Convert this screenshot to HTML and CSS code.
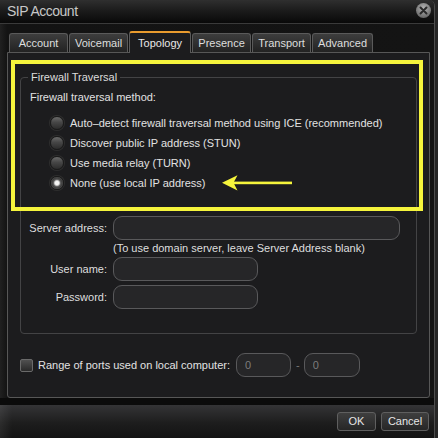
FILE: index.html
```html
<!DOCTYPE html>
<html>
<head>
<meta charset="utf-8">
<title>SIP Account</title>
<link rel="stylesheet" href="styles.css">
</head>
<body>
<div class="window">
  <div class="titlebar">
    <span class="title">SIP Account</span>
    <span class="close">
      <svg width="9" height="9" viewBox="0 0 9 9"><path d="M1.5 1.5 L7.5 7.5 M7.5 1.5 L1.5 7.5" stroke="#2a2a2a" stroke-width="2" stroke-linecap="round"/></svg>
    </span>
  </div>
  <div class="content">
    <div class="tabs">
      <div class="tab">Account</div>
      <div class="tab">Voicemail</div>
      <div class="tab tab-active">Topology</div>
      <div class="tab">Presence</div>
      <div class="tab">Transport</div>
      <div class="tab">Advanced</div>
    </div>
    <div class="panel">
      <fieldset class="group">
        <legend class="group-title">Firewall Traversal</legend>
        <div class="method-label">Firewall traversal method:</div>
        <div class="radios">
          <label class="radio-row"><input type="radio" class="radio" name="fw">Auto–detect firewall traversal method using ICE (recommended)</label>
          <label class="radio-row"><input type="radio" class="radio" name="fw">Discover public IP address (STUN)</label>
          <label class="radio-row"><input type="radio" class="radio" name="fw">Use media relay (TURN)</label>
          <label class="radio-row"><input type="radio" class="radio" name="fw" checked>None (use local IP address)</label>
        </div>
        <div class="form-grid">
          <label class="field-label">Server address:</label>
          <input class="field field-wide" type="text">
          <div class="hint">(To use domain server, leave Server Address blank)</div>
          <label class="field-label">User name:</label>
          <input class="field field-short" type="text">
          <label class="field-label gap-top">Password:</label>
          <input class="field field-short gap-top" type="password">
        </div>
      </fieldset>
      <div class="ports-row">
        <input type="checkbox" class="checkbox">
        <span class="port-label">Range of ports used on local computer:</span>
        <input class="field port" type="text" value="0">
        <span class="dash">-</span>
        <input class="field port port-2" type="text" value="0">
      </div>
    </div>
  </div>
  <div class="strip"></div>
  <div class="footer">
    <button class="btn btn-ok">OK</button>
    <button class="btn btn-cancel">Cancel</button>
  </div>
  <div class="highlight"></div>
  <svg class="arrow" width="76" height="22" viewBox="0 0 76 22">
    <rect x="12" y="9.6" width="60" height="2.6" fill="#f5f43c"/>
    <path d="M2 10.8 L17.5 3.2 L13.5 10.8 L17.5 18.6 Z" fill="#f5f43c"/>
  </svg>
</div>
</body>
</html>
```
FILE: styles.css
```css
* { box-sizing: border-box; }
html, body { margin: 0; padding: 0; }
body {
  width: 438px;
  height: 438px;
  overflow: hidden;
  background: #262626;
  font-family: "Liberation Sans", Arial, sans-serif;
  font-size: 11px;
  color: #e2e2e2;
}
.window {
  position: relative;
  width: 435px;
  height: 438px;
  display: flex;
  flex-direction: column;
  background: #131313;
  border-right: 1px solid #4e4e4e;
  border-top-right-radius: 6px;
  overflow: hidden;
}
.titlebar {
  flex: none;
  height: 24px;
  display: flex;
  justify-content: space-between;
  align-items: flex-start;
  padding: 0 3px 0 7px;
  background: linear-gradient(#2f2f2f, #1c1c1c 45%, #090909);
  border-bottom: 1px solid #3a3a3a;
}
.title {
  font-size: 14px;
  letter-spacing: -0.5px;
  line-height: 23px;
  color: #c8c8c8;
}
.close {
  margin-top: 3px;
  width: 15px;
  height: 15px;
  border-radius: 50%;
  background: radial-gradient(circle at 50% 35%, #b4b4b4, #7a7a7a 60%, #505050);
  display: flex;
  align-items: center;
  justify-content: center;
}
.content {
  flex: none;
  padding: 7px 4px 0 7px;
  background: linear-gradient(90deg, #202020, #131313 7px, #141414);
}
.tabs {
  display: flex;
  align-items: flex-end;
  gap: 1px;
  height: 21px;
  padding-left: 2px;
}
.tab {
  height: 19px;
  min-width: 59px;
  padding: 0 5px;
  border: 1px solid #5a5a5a;
  border-bottom: none;
  border-radius: 3px 3px 0 0;
  background: linear-gradient(#3d3d3d, #222);
  line-height: 18px;
  text-align: center;
  color: #dedede;
}
.tab-active {
  position: relative;
  z-index: 1;
  height: 22px;
  min-width: 62px;
  margin-bottom: -1px;
  border-top: 2px solid #e99b2e;
  background: #1c1c1e;
  line-height: 20px;
  color: #e8e8e8;
}
.panel {
  border: 1px solid #575757;
  border-radius: 0 0 3px 3px;
  background: #1c1c1e;
  padding: 17px 12px 20px 12px;
}
.group {
  margin: 0;
  min-width: 0;
  padding: 6px 9px 24px 9px;
  border: 1px solid #434345;
  border-radius: 4px;
}
.group-title {
  margin-left: -2px;
  padding: 0 3px;
  line-height: 14px;
  color: #dcdcdc;
}
.method-label {
  line-height: 14px;
}
.radios {
  margin-top: 9px;
  padding-left: 20px;
  display: flex;
  flex-direction: column;
}
.radio-row {
  height: 20px;
  display: flex;
  align-items: center;
  gap: 6px;
}
.radio {
  appearance: none;
  -webkit-appearance: none;
  flex: none;
  margin: 0;
  width: 14px;
  height: 14px;
  border-radius: 50%;
  border: 1px solid #1a1a1a;
  background: linear-gradient(#6a6a6a, #464646 45%, #2c2c2c);
  box-shadow: 0 0 0 1px #2e2e2e;
}
.radio:checked {
  background: radial-gradient(circle, #f4f4f4 0 1.8px, #bdbdbd 2.6px, #5a5a5a 3.6px, #3c3c3c 5px, #5e5e5e 6.5px);
}
.form-grid {
  margin: 23px 0 0 -5px;
  display: grid;
  grid-template-columns: 82px auto;
  column-gap: 6px;
  align-items: center;
  justify-items: start;
}
.field-label {
  justify-self: end;
  white-space: nowrap;
  color: #dedede;
}
.field {
  height: 24px;
  margin: 0;
  padding: 0 8px;
  border: 1px solid #59595b;
  border-radius: 9px;
  background: #262628;
  font: inherit;
  color: #7c7c7c;
  outline: none;
}
.field-wide { width: 287px; }
.field-short { width: 145px; }
.hint {
  grid-column: 2;
  line-height: 14px;
  padding: 1px 0 2px;
  white-space: nowrap;
  color: #dedede;
}
.gap-top { margin-top: 4px; }
.ports-row {
  margin-top: 19px;
  height: 24px;
  display: flex;
  align-items: center;
}
.checkbox {
  appearance: none;
  -webkit-appearance: none;
  flex: none;
  margin: 0 5px 0 0;
  width: 13px;
  height: 13px;
  border: 1px solid #6a6a6a;
  border-radius: 2px;
  background: linear-gradient(#505050, #2a2a2a);
}
.port-label {
  margin-right: 6px;
  white-space: nowrap;
}
.port { width: 55px; }
.port-2 { width: 56px; }
.dash {
  margin: 0 4px 0 5px;
  color: #777;
}
.strip {
  flex: none;
  height: 7px;
  background: #0b0b0b;
}
.footer {
  flex: 1;
  display: flex;
  justify-content: flex-end;
  align-items: flex-start;
  gap: 5px;
  padding: 7px 5px 0 0;
  background:
    linear-gradient(90deg, rgba(255,255,255,0.07), rgba(255,255,255,0) 12px),
    linear-gradient(#343436, #1d1d1d 55%, #131313);
}
.btn {
  height: 19px;
  padding: 0;
  border: 1px solid #5f5f5f;
  border-radius: 3px;
  background: linear-gradient(#3f3f3f, #262626);
  color: #e6e6e6;
  font: inherit;
  line-height: 17px;
}
.btn-ok { width: 39px; }
.btn-cancel { width: 48px; }
.highlight {
  position: absolute;
  left: 11px;
  top: 60px;
  width: 412px;
  height: 151px;
  border: 4px solid #f5f43c;
  pointer-events: none;
}
.arrow {
  position: absolute;
  left: 220px;
  top: 172px;
}
```
